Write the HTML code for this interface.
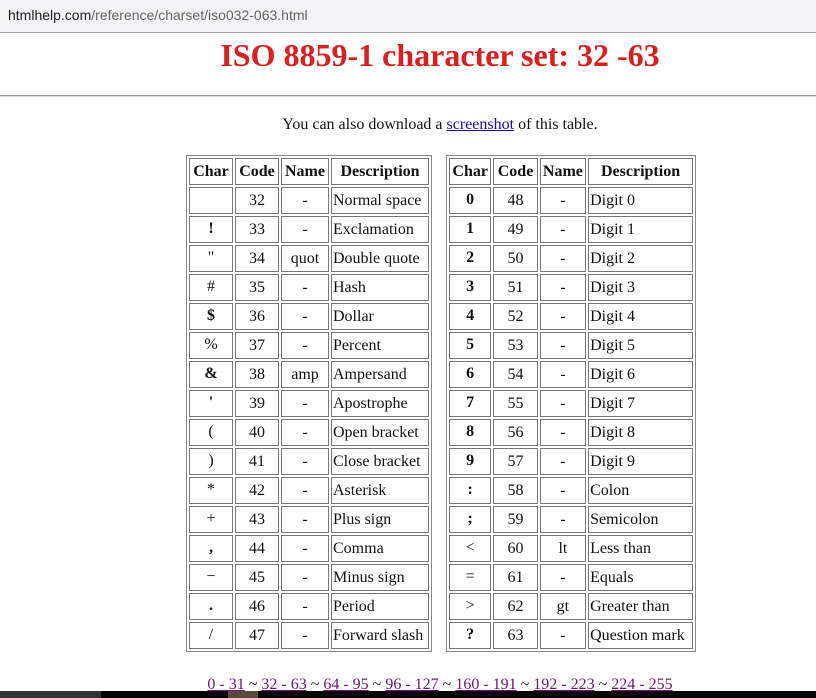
<!DOCTYPE html>
<html><head><style>
*{margin:0;padding:0;box-sizing:border-box}
body{width:816px;height:698px;background:#fff;position:relative;overflow:hidden;font-family:"Liberation Serif",serif;color:#111}
.bar{position:absolute;left:0;top:0;width:816px;height:33px;background:#f1f3f4;border-bottom:1px solid #a0a0a0}
.bar span{position:absolute;left:8px;top:7px;font:14px "Liberation Sans",sans-serif;color:#666}
.bar b{font-weight:normal;color:#222}
h1{position:absolute;top:37px;left:0;width:880px;text-align:center;color:#d92020;font-size:32px;font-weight:bold}
hr{position:absolute;top:95px;left:0;width:816px;border:0;border-top:1px solid #999;border-bottom:1px solid #ddd}
.dl{position:absolute;top:116px;left:0;width:880px;text-align:center;font-size:16px}
a{color:#1a0dab}
table{position:absolute;top:155px;border:1px solid #888;border-spacing:2px;table-layout:fixed;font-size:16px}
td,th{border:1px solid #777;height:27px;text-align:center;padding:0;white-space:nowrap}
th{font-weight:bold}
td.d{text-align:left;padding-left:1px}
td.c{font-weight:bold;vertical-align:top;padding-top:3px}
.f{position:absolute;top:676px;left:0;width:880px;text-align:center;font-size:16px;color:#222}
.f a{color:#6b1a6b}
.bb{position:absolute;top:691px;height:7px}
</style></head><body>
<div class="bar"><span><b>htmlhelp.com</b>/reference/charset/iso032-063.html</span></div>
<h1>ISO 8859-1 character set: 32 -63</h1>
<hr>
<div class="dl">You can also download a <a href="#">screenshot</a> of this table.</div>
<table style="left:186px;width:246px">
<colgroup><col style="width:44px"><col style="width:44px"><col style="width:48px"><col style="width:98px"></colgroup>
<tr><th>Char</th><th>Code</th><th>Name</th><th>Description</th></tr>
<tr><td class="c">&nbsp;</td><td>32</td><td>-</td><td class="d">Normal space</td></tr>
<tr><td class="c">!</td><td>33</td><td>-</td><td class="d">Exclamation</td></tr>
<tr><td class="c" style="font-weight:normal">"</td><td>34</td><td>quot</td><td class="d">Double quote</td></tr>
<tr><td class="c" style="font-weight:normal">#</td><td>35</td><td>-</td><td class="d">Hash</td></tr>
<tr><td class="c">$</td><td>36</td><td>-</td><td class="d">Dollar</td></tr>
<tr><td class="c" style="font-weight:normal">%</td><td>37</td><td>-</td><td class="d">Percent</td></tr>
<tr><td class="c">&amp;</td><td>38</td><td>amp</td><td class="d">Ampersand</td></tr>
<tr><td class="c">'</td><td>39</td><td>-</td><td class="d">Apostrophe</td></tr>
<tr><td class="c" style="font-weight:normal">(</td><td>40</td><td>-</td><td class="d">Open bracket</td></tr>
<tr><td class="c" style="font-weight:normal">)</td><td>41</td><td>-</td><td class="d">Close bracket</td></tr>
<tr><td class="c" style="font-weight:normal">*</td><td>42</td><td>-</td><td class="d">Asterisk</td></tr>
<tr><td class="c" style="font-weight:normal">+</td><td>43</td><td>-</td><td class="d">Plus sign</td></tr>
<tr><td class="c">,</td><td>44</td><td>-</td><td class="d">Comma</td></tr>
<tr><td class="c" style="font-weight:normal">&minus;</td><td>45</td><td>-</td><td class="d">Minus sign</td></tr>
<tr><td class="c">.</td><td>46</td><td>-</td><td class="d">Period</td></tr>
<tr><td class="c" style="font-weight:normal">/</td><td>47</td><td>-</td><td class="d">Forward slash</td></tr>
</table>
<table style="left:446px;width:250px">
<colgroup><col style="width:42px"><col style="width:44px"><col style="width:46px"><col style="width:104px"></colgroup>
<tr><th>Char</th><th>Code</th><th>Name</th><th>Description</th></tr>
<tr><td class="c">0</td><td>48</td><td>-</td><td class="d">Digit 0</td></tr>
<tr><td class="c">1</td><td>49</td><td>-</td><td class="d">Digit 1</td></tr>
<tr><td class="c">2</td><td>50</td><td>-</td><td class="d">Digit 2</td></tr>
<tr><td class="c">3</td><td>51</td><td>-</td><td class="d">Digit 3</td></tr>
<tr><td class="c">4</td><td>52</td><td>-</td><td class="d">Digit 4</td></tr>
<tr><td class="c">5</td><td>53</td><td>-</td><td class="d">Digit 5</td></tr>
<tr><td class="c">6</td><td>54</td><td>-</td><td class="d">Digit 6</td></tr>
<tr><td class="c">7</td><td>55</td><td>-</td><td class="d">Digit 7</td></tr>
<tr><td class="c">8</td><td>56</td><td>-</td><td class="d">Digit 8</td></tr>
<tr><td class="c">9</td><td>57</td><td>-</td><td class="d">Digit 9</td></tr>
<tr><td class="c">:</td><td>58</td><td>-</td><td class="d">Colon</td></tr>
<tr><td class="c">;</td><td>59</td><td>-</td><td class="d">Semicolon</td></tr>
<tr><td class="c" style="font-weight:normal">&lt;</td><td>60</td><td>lt</td><td class="d">Less than</td></tr>
<tr><td class="c" style="font-weight:normal">=</td><td>61</td><td>-</td><td class="d">Equals</td></tr>
<tr><td class="c" style="font-weight:normal">&gt;</td><td>62</td><td>gt</td><td class="d">Greater than</td></tr>
<tr><td class="c">?</td><td>63</td><td>-</td><td class="d">Question mark</td></tr>
</table>
<div class="f"><a href="#">0 - 31</a> ~ <a href="#">32 - 63</a> ~ <a href="#">64 - 95</a> ~ <a href="#">96 - 127</a> ~ <a href="#">160 - 191</a> ~ <a href="#">192 - 223</a> ~ <a href="#">224 - 255</a></div>
<div class="bb" style="left:0;width:101px;background:#333"></div>
<div class="bb" style="left:101px;width:127px;background:#000"></div>
<div class="bb" style="left:228px;width:30px;background:#5a4a40"></div>
<div class="bb" style="left:258px;width:558px;background:#050505"></div>
</body></html>
